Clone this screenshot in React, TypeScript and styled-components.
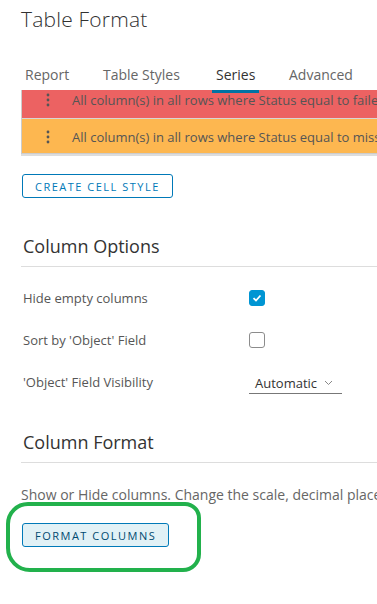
import React from 'react';
import styled, { createGlobalStyle } from 'styled-components';

const GlobalStyle = createGlobalStyle`
  html, body {
    margin: 0;
    padding: 0;
    background: #fff;
    overflow: hidden;
  }
  body {
    font-family: "Open Sans", Lato, sans-serif;
    color: #333;
  }
`;

const Page = styled.div`
  width: 377px;
  height: 604px;
  overflow: hidden;
  padding-left: 21px;
  box-sizing: border-box;
`;

const Title = styled.h1`
  margin: 0;
  padding-top: 5px;
  height: 31px;
  line-height: 28px;
  font-size: 21px;
  font-weight: 300;
  color: #313131;
  letter-spacing: 0.2px;
`;

const Tabs = styled.div`
  display: flex;
  margin-top: 24px;
  height: 30px;
`;

const Tab = styled.div<{ $active?: boolean; $width: number }>`
  width: ${(p) => p.$width}px;
  flex: none;
  position: relative;
  font-size: 14px;
  line-height: 30px;
  color: ${(p) => (p.$active ? '#333' : '#666')};
  padding-left: 4px;
  box-sizing: border-box;
  &::after {
    content: '';
    display: ${(p) => (p.$active ? 'block' : 'none')};
    position: absolute;
    left: 0;
    bottom: -3px;
    width: 47px;
    height: 3px;
    background: #0072a3;
  }
`;

const RuleList = styled.div`
  width: 420px;
  height: 64px;
  overflow: hidden;
  border: 1px solid #ccc;
  border-top: none;
  box-shadow: 0 2px 0 #ddd;
  box-sizing: border-box;
`;

const RuleScroll = styled.div`
  margin-top: -8px;
`;

const RuleRow = styled.div<{ $color: string }>`
  display: flex;
  align-items: center;
  height: 36px;
  background: ${(p) => p.$color};
  border-bottom: 1px solid #d6d6d6;
  font-size: 13px;
  color: #555;
  white-space: nowrap;
`;

const Handle = styled.span`
  width: 50px;
  flex: none;
  display: flex;
  justify-content: center;
  padding-left: 2px;
  box-sizing: border-box;
`;

const ButtonRow = styled.div`
  margin-top: 20px;
`;

const OutlineButton = styled.button<{ $solid?: boolean }>`
  display: block;
  margin-left: 1px;
  height: 24px;
  padding: 0 12px;
  border: 1px solid #0079b8;
  border-radius: 3px;
  background: ${(p) => (p.$solid ? '#e1f1f6' : '#fff')};
  color: ${(p) => (p.$solid ? '#004a70' : '#0079b8')};
  font-family: "Open Sans", Lato, sans-serif;
  font-size: 11px;
  font-weight: 500;
  letter-spacing: 1.5px;
  text-transform: uppercase;
  cursor: pointer;
`;

const SectionHeading = styled.h2<{ $top: number }>`
  margin: ${(p) => p.$top}px 0 0;
  padding-left: 2px;
  height: 32px;
  line-height: 32px;
  font-size: 18px;
  font-weight: 400;
  color: #333;
  border-bottom: 1px solid #ddd;
  padding-bottom: 4px;
  box-sizing: content-box;
`;

const Options = styled.div`
  margin-top: 10px;
`;

const OptionRow = styled.div`
  display: grid;
  grid-template-columns: 226px auto;
  align-items: center;
  height: 42px;
  padding-left: 2px;
  font-size: 13px;
  color: #565656;
`;

const Box = styled.span<{ $checked?: boolean }>`
  width: 16px;
  height: 16px;
  box-sizing: border-box;
  border-radius: 3px;
  border: 1px solid ${(p) => (p.$checked ? '#0095d3' : '#8c8c8c')};
  background: ${(p) => (p.$checked ? '#0095d3' : '#fff')};
  display: flex;
  align-items: center;
  justify-content: center;
`;

const Select = styled.div`
  width: 93px;
  height: 22px;
  box-sizing: border-box;
  border-bottom: 1px solid #777;
  display: flex;
  align-items: center;
  gap: 7px;
  padding-left: 6px;
  font-size: 13px;
  color: #333;
  margin-top: 2px;
`;

const Description = styled.p`
  margin: 22px 0 0;
  font-size: 14px;
  color: #666;
  white-space: nowrap;
  line-height: 20px;
`;

const Callout = styled.div`
  position: relative;
  margin-top: 18px;
`;

const Annotation = styled.div`
  position: absolute;
  left: -15px;
  top: -21px;
  width: 187px;
  height: 62px;
  border: 4px solid #22b14c;
  border-radius: 22px 16px 18px 24px;
  pointer-events: none;
`;

const Dots = () => (
  <svg width="4" height="14" viewBox="0 0 4 14">
    <circle cx="2" cy="2" r="1.4" fill="#555" />
    <circle cx="2" cy="7" r="1.4" fill="#555" />
    <circle cx="2" cy="12" r="1.4" fill="#555" />
  </svg>
);

const tabs = [
  { label: 'Report', width: 78 },
  { label: 'Table Styles', width: 113 },
  { label: 'Series', width: 73 },
  { label: 'Advanced', width: 100 },
];

const rules = [
  { color: '#ec6262', text: 'All column(s) in all rows where Status equal to failed' },
  { color: '#fdb750', text: 'All column(s) in all rows where Status equal to missing' },
];

export default function App() {
  return (
    <Page>
      <GlobalStyle />
      <Title>Table Format</Title>
      <Tabs>
        {tabs.map((t) => (
          <Tab key={t.label} $width={t.width} $active={t.label === 'Series'}>
            {t.label}
          </Tab>
        ))}
      </Tabs>
      <RuleList>
        <RuleScroll>
          {rules.map((r) => (
            <RuleRow key={r.text} $color={r.color}>
              <Handle>
                <Dots />
              </Handle>
              {r.text}
            </RuleRow>
          ))}
        </RuleScroll>
      </RuleList>
      <ButtonRow>
        <OutlineButton>Create Cell Style</OutlineButton>
      </ButtonRow>
      <SectionHeading $top={32}>Column Options</SectionHeading>
      <Options>
        <OptionRow>
          <span>Hide empty columns</span>
          <Box $checked>
            <svg width="10" height="8" viewBox="0 0 10 8">
              <path d="M1.5 4.2 L4 6.5 L8.5 1.5" fill="none" stroke="#fff" strokeWidth="1.8" />
            </svg>
          </Box>
        </OptionRow>
        <OptionRow>
          <span>Sort by 'Object' Field</span>
          <Box />
        </OptionRow>
        <OptionRow>
          <span>'Object' Field Visibility</span>
          <Select>
            Automatic
            <svg width="9" height="6" viewBox="0 0 9 6">
              <path d="M1 1 L4.5 4.5 L8 1" fill="none" stroke="#888" strokeWidth="1" />
            </svg>
          </Select>
        </OptionRow>
      </Options>
      <SectionHeading $top={23}>Column Format</SectionHeading>
      <Description>Show or Hide columns. Change the scale, decimal places and units.</Description>
      <Callout>
        <OutlineButton $solid>Format Columns</OutlineButton>
        <Annotation />
      </Callout>
    </Page>
  );
}
